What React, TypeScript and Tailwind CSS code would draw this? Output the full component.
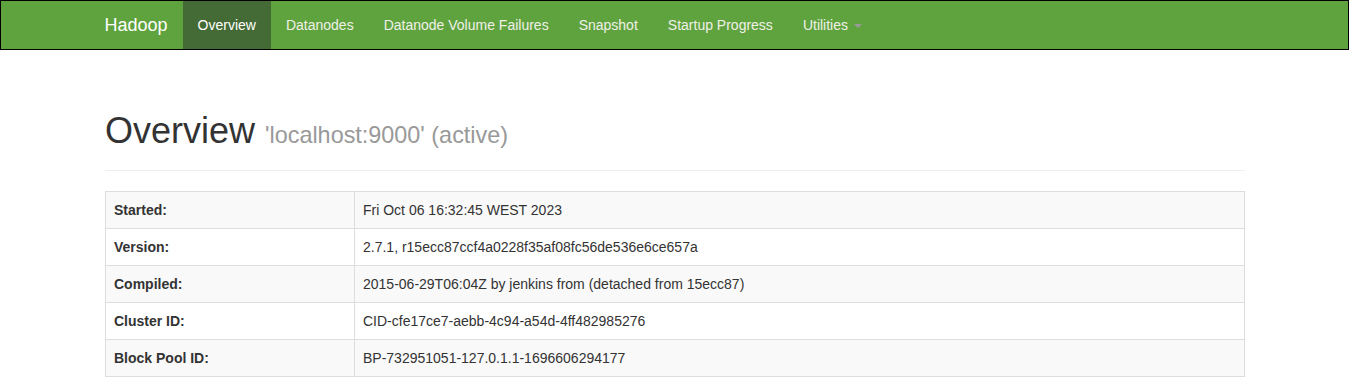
import React from "react";

const navItems = [
  { label: "Overview", active: true },
  { label: "Datanodes" },
  { label: "Datanode Volume Failures" },
  { label: "Snapshot" },
  { label: "Startup Progress" },
];

const rows = [
  ["Started:", "Fri Oct 06 16:32:45 WEST 2023"],
  ["Version:", "2.7.1, r15ecc87ccf4a0228f35af08fc56de536e6ce657a"],
  ["Compiled:", "2015-06-29T06:04Z by jenkins from (detached from 15ecc87)"],
  ["Cluster ID:", "CID-cfe17ce7-aebb-4c94-a54d-4ff482985276"],
  ["Block Pool ID:", "BP-732951051-127.0.1.1-1696606294177"],
];

export default function App() {
  return (
    <div className="min-h-[389px] w-[1350px] bg-white text-[14px] leading-[20px] text-[#333] font-['Liberation_Sans',Arial,sans-serif]">
      {/* Navbar */}
      <nav className="h-[50px] w-[1349px] border border-black bg-[#5fa33e]">
        <div className="mx-auto flex h-full w-[1170px] px-[15px]">
          <a className="flex h-[48px] items-center pr-[15px] text-[18px] text-white">Hadoop</a>
          <ul className="flex">
            {navItems.map((item) => (
              <li key={item.label}>
                <a
                  className={
                    "flex h-[48px] items-center px-[15px] " +
                    (item.active ? "bg-[#446b35] text-white" : "text-[#f0f0e8]")
                  }
                >
                  {item.label}
                </a>
              </li>
            ))}
            <li>
              <a className="flex h-[48px] items-center px-[15px] text-[#f0f0e8]">
                Utilities
                <span className="ml-[6px] mt-[2px] inline-block h-0 w-0 border-x-[4px] border-t-[4px] border-x-transparent border-t-[#9a9a9a]" />
              </a>
            </li>
          </ul>
        </div>
      </nav>

      {/* Content */}
      <div className="mx-auto w-[1170px] px-[15px]">
        <div className="mt-[61px] mb-[20px] border-b border-[#eee] pb-[9px]">
          <h1 className="mb-[10px] text-[36px] leading-[39.6px] font-normal text-[#333]">
            Overview{" "}
            <small className="text-[23.4px] leading-none text-[#999]">'localhost:9000' (active)</small>
          </h1>
        </div>

        <table className="w-full border-collapse border border-[#ddd]">
          <tbody>
            {rows.map(([k, v], i) => (
              <tr key={k} className={i % 2 === 0 ? "bg-[#f9f9f9]" : "bg-white"}>
                <th className="w-[249px] border border-[#ddd] p-[8px] text-left font-bold">{k}</th>
                <td className="border border-[#ddd] p-[8px]">{v}</td>
              </tr>
            ))}
          </tbody>
        </table>
      </div>
    </div>
  );
}
